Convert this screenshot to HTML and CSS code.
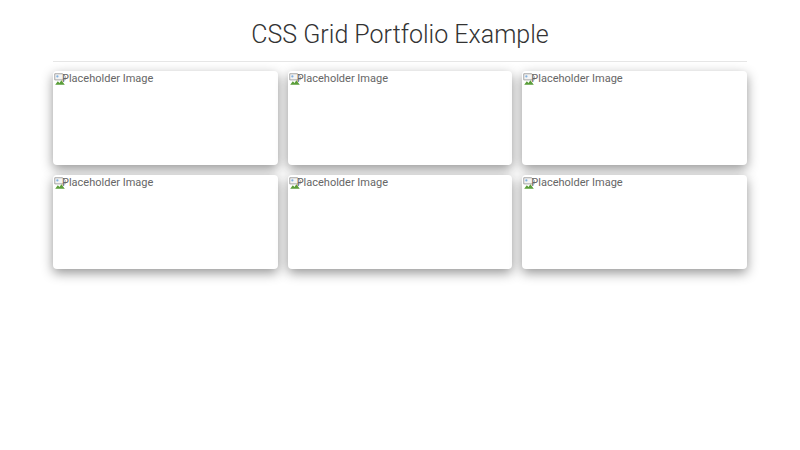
FILE: index.html
```html
<!DOCTYPE html>
<html>
<head>
<meta charset="utf-8">
<link rel="stylesheet" href="styles.css">
</head>
<body>
<div class="page">
  <h1 class="title">CSS Grid Portfolio Example</h1>
  <div class="grid">
    <div class="card"><span class="ph"><svg class="broken" viewBox="0 0 16 16" width="16" height="16"><path d="M2 2h9l3 3v4H2z" fill="#f4f4f4" stroke="#9a9a9a" stroke-width="1"/><path d="M2.5 14.5l3-4 2 2 2-3 4 5z" fill="#5a9e3a"/><circle cx="5" cy="5" r="1.3" fill="#7fb0df"/></svg>Placeholder Image</span></div>
    <div class="card"><span class="ph"><svg class="broken" viewBox="0 0 16 16" width="16" height="16"><path d="M2 2h9l3 3v4H2z" fill="#f4f4f4" stroke="#9a9a9a" stroke-width="1"/><path d="M2.5 14.5l3-4 2 2 2-3 4 5z" fill="#5a9e3a"/><circle cx="5" cy="5" r="1.3" fill="#7fb0df"/></svg>Placeholder Image</span></div>
    <div class="card"><span class="ph"><svg class="broken" viewBox="0 0 16 16" width="16" height="16"><path d="M2 2h9l3 3v4H2z" fill="#f4f4f4" stroke="#9a9a9a" stroke-width="1"/><path d="M2.5 14.5l3-4 2 2 2-3 4 5z" fill="#5a9e3a"/><circle cx="5" cy="5" r="1.3" fill="#7fb0df"/></svg>Placeholder Image</span></div>
    <div class="card"><span class="ph"><svg class="broken" viewBox="0 0 16 16" width="16" height="16"><path d="M2 2h9l3 3v4H2z" fill="#f4f4f4" stroke="#9a9a9a" stroke-width="1"/><path d="M2.5 14.5l3-4 2 2 2-3 4 5z" fill="#5a9e3a"/><circle cx="5" cy="5" r="1.3" fill="#7fb0df"/></svg>Placeholder Image</span></div>
    <div class="card"><span class="ph"><svg class="broken" viewBox="0 0 16 16" width="16" height="16"><path d="M2 2h9l3 3v4H2z" fill="#f4f4f4" stroke="#9a9a9a" stroke-width="1"/><path d="M2.5 14.5l3-4 2 2 2-3 4 5z" fill="#5a9e3a"/><circle cx="5" cy="5" r="1.3" fill="#7fb0df"/></svg>Placeholder Image</span></div>
    <div class="card"><span class="ph"><svg class="broken" viewBox="0 0 16 16" width="16" height="16"><path d="M2 2h9l3 3v4H2z" fill="#f4f4f4" stroke="#9a9a9a" stroke-width="1"/><path d="M2.5 14.5l3-4 2 2 2-3 4 5z" fill="#5a9e3a"/><circle cx="5" cy="5" r="1.3" fill="#7fb0df"/></svg>Placeholder Image</span></div>
  </div>
</div>
</body>
</html>
```
FILE: styles.css
```css
html, body {
  margin: 0;
  padding: 0;
  background: #fff;
  font-family: Roboto, "Liberation Sans", sans-serif;
}
.page {
  width: 694px;
  margin: 0 auto;
  padding: 20px 0 60px;
}
.title {
  margin: 0;
  padding-bottom: 11px;
  border-bottom: 1px solid #e6e6e6;
  text-align: center;
  font-size: 25px;
  font-weight: 300;
  line-height: 30px;
  color: #333;
}
.grid {
  display: grid;
  grid-template-columns: repeat(3, 1fr);
  grid-auto-rows: 94px;
  gap: 10px;
  margin-top: 9px;
}
.card {
  background: #fff;
  border-radius: 4px;
  box-shadow: 0 4px 12px rgba(0, 0, 0, 0.42);
  overflow: hidden;
}
.ph {
  display: flex;
  align-items: flex-start;
  padding-top: 1px;
  font-size: 11px;
  font-weight: 400;
  line-height: 14px;
  color: #666;
}
.broken {
  flex: none;
  width: 14px;
  height: 14px;
  margin-right: -5px;
}
```
